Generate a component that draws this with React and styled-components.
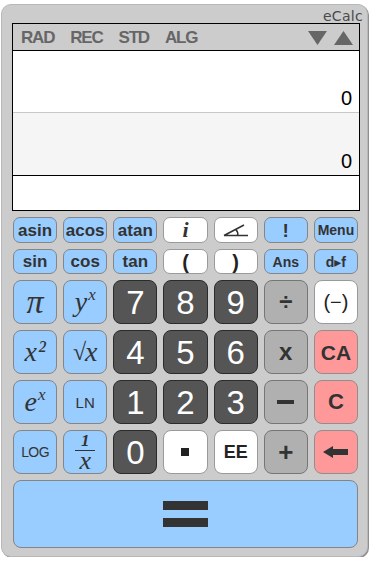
import React from "react";
import styled, { createGlobalStyle, css } from "styled-components";

const GlobalStyle = createGlobalStyle`
  html, body { margin: 0; padding: 0; background: #fff; }
  body { font-family: "Liberation Sans", Arial, "DejaVu Sans", sans-serif; }
  * { box-sizing: border-box; }
`;

const Panel = styled.div`
  width: 367px;
  height: 553px;
  margin: 4px 0 0 1px;
  padding: 0 0 0 10px;
  background: #cccccc;
  border: 1px solid #b8b8b8;
  border-radius: 10px;
  box-shadow: 1px 1px 0 #8f8f8f;
`;

const Brand = styled.div`
  height: 18px;
  display: flex;
  align-items: flex-end;
  justify-content: flex-end;
  padding: 0 4px 0 0;
  font-family: "DejaVu Sans", sans-serif;
  font-size: 14px;
  line-height: 14px;
  letter-spacing: 0.3px;
  color: #4a4a4a;
`;

const Display = styled.div`
  width: 348px;
  border: 1px solid #000;
  background: #fff;
`;

const StatusBar = styled.div`
  height: 27px;
  border-bottom: 1px solid #000;
  background: #cccccc;
  display: flex;
  align-items: center;
  padding: 1px 6px 0 8px;
`;

const Flags = styled.div`
  display: flex;
  gap: 16px;
  flex: 1;
`;

const Flag = styled.span`
  font-weight: bold;
  font-size: 17px;
  letter-spacing: -1.2px;
  color: #666;
`;

const Arrows = styled.div`
  display: flex;
  gap: 7px;
  align-items: center;
`;

const Line = styled.div`
  height: ${(p) => p.$h}px;
  background: ${(p) => p.$bg || "#fff"};
  border-bottom: ${(p) => (p.$line ? `1px solid ${p.$line}` : "none")};
  display: flex;
  align-items: flex-end;
  justify-content: flex-end;
  padding: 0 7px 4px 0;
  font-size: 20px;
  line-height: 20px;
  color: #000;
`;

const Keys = styled.div`
  margin: 6px 0 0 1px;
  width: 345px;
  display: grid;
  grid-template-columns: repeat(7, 1fr);
  grid-template-rows: 26px 25px 44px 44px 44px 44px 68px;
  row-gap: 6px;
  column-gap: 6px;
`;

const tones = {
  blue: css`background: #99ccff; border-color: #858585; color: #333;`,
  dark: css`background: #555555; border-color: #2b2b2b; color: #fff;`,
  gray: css`background: #b0b0b0; border-color: #767676; color: #333;`,
  red: css`background: #ff9999; border-color: #8f8f8f; color: #333;`,
  white: css`background: #ffffff; border-color: #9a9a9a; color: #222;`,
};

const Key = styled.button`
  margin: 0;
  padding: 0;
  border: 1px solid;
  border-radius: ${(p) => (p.$small ? 7 : 8)}px;
  display: flex;
  align-items: center;
  justify-content: center;
  font-family: "Liberation Sans", Arial, "DejaVu Sans", sans-serif;
  font-weight: ${(p) => (p.$weight ? p.$weight : "bold")};
  font-size: ${(p) => p.$size || 17}px;
  line-height: 1;
  letter-spacing: ${(p) => p.$ls || 0}px;
  cursor: pointer;
  ${(p) => tones[p.$tone]}
  ${(p) => p.$span && css`grid-column: 1 / -1;`}
`;

const Math = styled.span`
  font-family: "Liberation Serif", "Times New Roman", serif;
  font-style: italic;
  font-weight: ${(p) => p.$weight || "normal"};
  font-size: ${(p) => p.$size || 28}px;
  color: #333;
  line-height: 1;
  display: inline-flex;
  align-items: flex-start;
`;

const Sup = styled.span`
  font-size: ${(p) => p.$size || 17}px;
  margin-top: ${(p) => p.$mt ?? -2}px;
  margin-left: 1px;
`;

const Frac = styled.span`
  display: inline-flex;
  flex-direction: column;
  align-items: center;
  font-family: "Liberation Serif", "Times New Roman", serif;
  font-style: italic;
  font-weight: normal;
  color: #333;
`;

const FracTop = styled.span`
  font-size: 17px;
  line-height: 14px;
  font-weight: bold;
  margin-bottom: 2px;
`;

const FracBar = styled.span`
  width: 20px;
  height: 1.5px;
  background: #333;
`;

const FracBottom = styled.span`
  font-size: 26px;
  line-height: 19px;
`;

const Dot = styled.span`
  width: 8px;
  height: 8px;
  background: #222;
`;

const Bar = styled.span`
  width: ${(p) => p.$w}px;
  height: ${(p) => p.$h}px;
  background: #333;
`;

const EqualsSign = styled.span`
  display: flex;
  flex-direction: column;
  gap: 8px;
`;

const Sqrt = styled.span`
  font-family: "Liberation Serif", serif;
  font-style: normal;
  font-size: 24px;
  margin-top: 2px;
  margin-right: -1px;
`;

const Tri = ({ up }) => (
  <svg width="19" height="14" viewBox="0 0 19 14">
    <polygon points={up ? "9.5,0 19,14 0,14" : "0,0 19,0 9.5,14"} fill="#666" />
  </svg>
);

const AngleIcon = () => (
  <svg width="26" height="14" viewBox="0 0 26 14">
    <path d="M1 12.5 H25 M1 12.5 L21 2 M13 6.8 Q15.5 9.5 14.5 12.5" stroke="#333" strokeWidth="1.6" fill="none" />
  </svg>
);

const BackArrow = () => (
  <svg width="25" height="12" viewBox="0 0 25 12">
    <polygon points="0,6 10,0 10,3 25,3 25,9 10,9 10,12" fill="#333" />
  </svg>
);

export default function App() {
  return (
    <>
      <GlobalStyle />
      <Panel>
        <Brand>eCalc</Brand>
        <Display>
          <StatusBar>
            <Flags>
              <Flag>RAD</Flag>
              <Flag>REC</Flag>
              <Flag>STD</Flag>
              <Flag>ALG</Flag>
            </Flags>
            <Arrows>
              <Tri />
              <Tri up />
            </Arrows>
          </StatusBar>
          <Line $h={62} $line="#c8c8c8">0</Line>
          <Line $h={63} $bg="#f5f5f5" $line="#000">0</Line>
          <Line $h={34} />
        </Display>
        <Keys>
          <Key $small $tone="blue">asin</Key>
          <Key $small $tone="blue">acos</Key>
          <Key $small $tone="blue">atan</Key>
          <Key $small $tone="white">
            <Math $size={22} $weight="bold">i</Math>
          </Key>
          <Key $small $tone="white"><AngleIcon /></Key>
          <Key $small $tone="blue" $size={19}>!</Key>
          <Key $small $tone="blue" $size={14}>Menu</Key>

          <Key $small $tone="blue">sin</Key>
          <Key $small $tone="blue">cos</Key>
          <Key $small $tone="blue">tan</Key>
          <Key $small $tone="white" $size={20}>(</Key>
          <Key $small $tone="white" $size={20}>)</Key>
          <Key $small $tone="blue" $size={14}>Ans</Key>
          <Key $small $tone="blue" $size={14}>d▸f</Key>

          <Key $tone="blue"><Math $size={34}>π</Math></Key>
          <Key $tone="blue"><Math $size={28}>y<Sup>x</Sup></Math></Key>
          <Key $tone="dark" $size={33} $weight="normal">7</Key>
          <Key $tone="dark" $size={33} $weight="normal">8</Key>
          <Key $tone="dark" $size={33} $weight="normal">9</Key>
          <Key $tone="gray" $size={24}>÷</Key>
          <Key $tone="white" $size={20} $weight="normal">(−)</Key>

          <Key $tone="blue"><Math $size={28}>x<Sup $size={26} $mt={0}>²</Sup></Math></Key>
          <Key $tone="blue"><Math $size={28}><Sqrt>√</Sqrt>x</Math></Key>
          <Key $tone="dark" $size={33} $weight="normal">4</Key>
          <Key $tone="dark" $size={33} $weight="normal">5</Key>
          <Key $tone="dark" $size={33} $weight="normal">6</Key>
          <Key $tone="gray" $size={24}>x</Key>
          <Key $tone="red" $size={21}>CA</Key>

          <Key $tone="blue"><Math $size={28}>e<Sup>x</Sup></Math></Key>
          <Key $tone="blue" $size={15} $weight="normal">LN</Key>
          <Key $tone="dark" $size={33} $weight="normal">1</Key>
          <Key $tone="dark" $size={33} $weight="normal">2</Key>
          <Key $tone="dark" $size={33} $weight="normal">3</Key>
          <Key $tone="gray" aria-label="minus"><Bar $w={17} $h={4} /></Key>
          <Key $tone="red" $size={22}>C</Key>

          <Key $tone="blue" $size={14} $weight="normal" $ls={-0.6}>LOG</Key>
          <Key $tone="blue">
            <Frac>
              <FracTop>1</FracTop>
              <FracBar />
              <FracBottom>x</FracBottom>
            </Frac>
          </Key>
          <Key $tone="dark" $size={33} $weight="normal">0</Key>
          <Key $tone="white" aria-label="decimal point"><Dot /></Key>
          <Key $tone="white" $size={18}>EE</Key>
          <Key $tone="gray" $size={26}>+</Key>
          <Key $tone="red" aria-label="backspace"><BackArrow /></Key>

          <Key $tone="blue" $span aria-label="equals">
            <EqualsSign>
              <Bar $w={45} $h={9} />
              <Bar $w={45} $h={9} />
            </EqualsSign>
          </Key>
        </Keys>
      </Panel>
    </>
  );
}
